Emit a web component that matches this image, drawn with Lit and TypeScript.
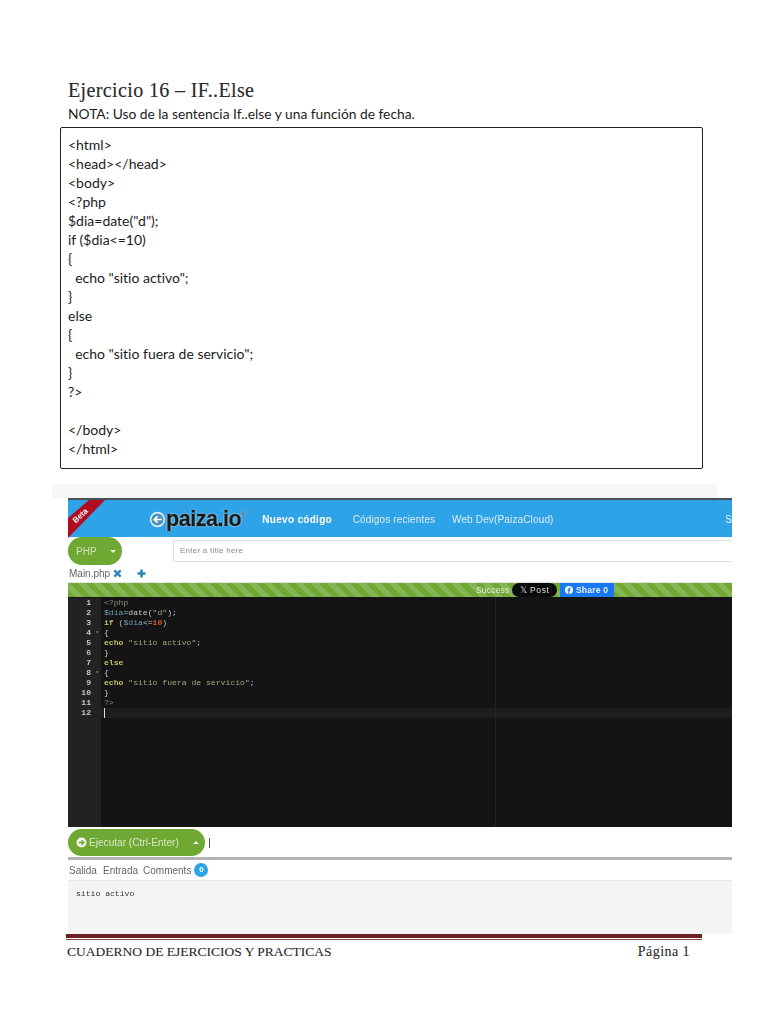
import { LitElement, html, css } from "lit";
import { customElement } from "lit/decorators.js";

const codeLines = [
  "<html>", "<head></head>", "<body>", "<?php", '$dia=date("d");', "if ($dia<=10)", "{",
  '  echo "sitio activo";', "}", "else", "{", '  echo "sitio fuera de servicio";', "}", "?>", "\u00a0", "</body>", "</html>",
];

const editor = [
  html`<span class="g">&lt;?php</span>`,
  html`<span class="b">$dia</span><span class="w">=date(</span><span class="s">"d"</span><span class="w">);</span>`,
  html`<span class="k">if</span> <span class="w">(</span><span class="b">$dia</span><span class="w">&lt;=</span><span class="r">10</span><span class="w">)</span>`,
  html`<span class="w">{</span>`,
  html`<span class="k">echo</span> <span class="s">"sitio activo"</span><span class="w">;</span>`,
  html`<span class="w">}</span>`,
  html`<span class="k">else</span>`,
  html`<span class="w">{</span>`,
  html`<span class="k">echo</span> <span class="s">"sitio fuera de servicio"</span><span class="w">;</span>`,
  html`<span class="w">}</span>`,
  html`<span class="g">?&gt;</span>`,
  html`<span class="caret"></span>`,
];

@customElement("app-root")
export class AppRoot extends LitElement {
  static styles = css`
    :host { display: block; width: 768px; height: 1024px; overflow: hidden; background: #fff; color: #222; }
    .title { margin: 78px 0 0 68px; height: 24px; font: 20px/24px "Liberation Serif", serif; letter-spacing: 0.37px; color: #2a2a2a; -webkit-text-stroke: 0.15px #2a2a2a; }
    .note { margin: 3px 0 0 68px; height: 17px; font: 13.8px/17px Lato, sans-serif; font-variant-ligatures: none; color: #1c1c1c; }
    .box { box-sizing: border-box; margin: 5px 0 0 60px; width: 643px; height: 342px; border: 1px solid #222; border-radius: 2px; padding: 7px 0 0 7px; font: 14px/19px Lato, sans-serif; font-variant-ligatures: none; color: #1c1c1c; white-space: pre; }
    .strip { margin: 15px 0 0 52px; width: 665px; height: 14px; background: #f6f6f6; }
    .shot { position: relative; margin-left: 68px; width: 664px; height: 436px; overflow: hidden; font-family: "Liberation Sans", sans-serif; filter: blur(0.45px); background: #fff; }
    .head { box-sizing: border-box; height: 39px; border-top: 2px solid #4a5058; background: #2ea3e8; display: flex; align-items: center; color: #eef7fd; font-size: 10px; letter-spacing: 0.15px; padding-top: 1px; }
    .ribbon { position: absolute; left: 0; top: 2px; }
    .logo { display: flex; align-items: center; margin-left: 81px; width: 114px; color: #141a1e; font: bold 21.5px/26px "Liberation Sans", sans-serif; letter-spacing: -0.45px; text-shadow: 0 0 1px #fff, 0 0 2px #dff; -webkit-text-stroke: 0.3px #141a1e; }
    .logo svg { flex: none; }
    .logo sup { font-size: 5px; line-height: 5px; align-self: flex-start; margin-top: 6px; letter-spacing: 0; -webkit-text-stroke: 0; }
    .nav-a { font-weight: bold; width: 91px; color: #fff; letter-spacing: 0.3px; }
    .nav-b { width: 100px; color: #dcecf8; }
    .nav-c { width: 275px; color: #dcecf8; }
    .row1 { display: flex; height: 28px; align-items: center; }
    .lang { box-sizing: border-box; width: 54px; height: 28px; border-radius: 14px; background: #6fa833; color: #cfe2b6; font-size: 10px; display: flex; align-items: center; justify-content: space-between; padding: 0 6px 0 8px; }
    .tri { width: 0; height: 0; border-left: 3px solid transparent; border-right: 3px solid transparent; border-top: 3px solid #e8f2dc; }
    .tri.up { border-top: 0; border-bottom: 3px solid #e8f2dc; }
    .input { box-sizing: border-box; margin-left: 51px; flex: 1; height: 22px; border: 1px solid #ddd; border-right: 0; border-radius: 2px; padding-left: 6px; color: #888; font-size: 8px; line-height: 20px; letter-spacing: 0.25px; }
    .tabs { display: flex; height: 18px; align-items: center; color: #666; font-size: 10px; border-bottom: 1px solid #e4e4e4; box-sizing: border-box; }
    .tab { padding: 0 0 0 1px; width: 44px; }
    .x { width: 9px; height: 9px; }
    .plus { width: 9px; height: 9px; margin-left: 15px; }
    .bar { height: 14px; background: repeating-linear-gradient(45deg, #6fa833 0 5.5px, #85b555 5.5px 11px); display: flex; align-items: center; color: #e6f0da; font-size: 8.5px; padding-left: 408px; letter-spacing: 0.2px; }
    .ok { width: 36px; }
    .post { box-sizing: border-box; width: 45px; height: 14px; border-radius: 7px; background: #0b0b0b; color: #ddd; text-align: center; line-height: 14px; letter-spacing: 0.6px; }
    .share { box-sizing: border-box; margin-left: 3px; width: 54px; height: 14px; background: #1877f2; color: #e8f1ff; display: flex; align-items: center; gap: 3px; padding-left: 5px; font-weight: bold; }
    .share svg { width: 8px; height: 8px; }
    .editor { position: relative; height: 230px; background: #141414; display: flex; font: 8.1px/10px "Liberation Mono", monospace; color: #ccc; padding-top: 1px; box-sizing: border-box; }
    .gutter { width: 33px; flex: none; background: #222; height: 229px; text-align: right; color: #c8c8c8; }
    .gutter div { height: 10px; padding-right: 10px; position: relative; font-weight: bold; }
    .gutter .fold::after { content: "▾"; position: absolute; right: 2px; top: 0; font-size: 6px; color: #888; }
    .lines { flex: 1; padding-left: 3px; }
    .lines div { height: 10px; white-space: pre; }
    .lines .active { background: #1e1e1e; margin-left: -3px; padding-left: 3px; }
    .divide { position: absolute; left: 427px; top: 0; bottom: 0; width: 1px; background: #222; }
    .g { color: #8f8a7a; } .b { color: #6f9fb5; } .w { color: #c8c8c8; } .s { color: #a3a380; } .k { color: #c4bf6a; font-weight: bold; } .r { color: #d8563a; font-weight: bold; }
    .caret { display: inline-block; width: 1px; height: 10px; background: #ddd; }
    .run-row { display: flex; align-items: center; height: 30px; padding-top: 1px; box-sizing: border-box; }
    .run { box-sizing: border-box; width: 137px; height: 27px; border-radius: 14px; background: #6fa833; color: #d9e8c8; font-size: 10.1px; display: flex; align-items: center; padding: 0 6px 0 8px; }
    .run svg { width: 11px; height: 11px; margin-right: 2px; flex: none; }
    .run span { flex: 1; }
    .cur { margin-left: 4px; width: 1px; height: 10px; background: #555; }
    .sep { height: 3px; background: #b4b4b4; }
    .tabs2 { display: flex; align-items: center; height: 20px; font-size: 10px; color: #666; box-sizing: border-box; padding-left: 1px; }
    .tabs2 span { margin-right: 5px; }
    .tabs2 .on { margin-right: 5px; width: 29px; }
    .badge { box-sizing: border-box; width: 14px; height: 14px; border-radius: 50%; background: #2ea3e8; color: #fff; font-size: 8px; line-height: 14px; text-align: center; font-weight: bold; margin: 0 0 0 -2px; }
    .out { height: 54px; background: #f4f4f4; border-top: 1px solid #e6e6e6; box-sizing: border-box; padding: 7px 0 0 8px; font: 8.1px/11px "Liberation Mono", monospace; color: #333; }
    .rule { margin-left: 66px; width: 636px; height: 6px; box-sizing: border-box; border-top: 4px solid #6b2122; border-bottom: 1px solid #8a4a4a; }
    .foot { margin: 3px 0 0 67px; width: 623px; display: flex; justify-content: space-between; font: 13.5px/18px "Liberation Serif", serif; color: #2a2a2a; -webkit-text-stroke: 0.1px #2a2a2a; }
    .foot .r2 { font-size: 14px; letter-spacing: 0.45px; }
  `;

  render() {
    return html`
      <div class="title">Ejercicio 16 – IF..Else</div>
      <div class="note">NOTA: Uso de la sentencia If..else y una función de fecha.</div>
      <div class="box">${codeLines.map((l) => html`<div>${l}</div>`)}</div>
      <div class="strip"></div>
      <div class="shot">
        <div class="head">
          <div class="logo">
            <svg width="17" height="17" viewBox="0 0 16 16"><circle cx="8" cy="8" r="6.500" fill="#4e93b8" stroke="#dfeef7" stroke-width="1.500"/><path d="M12 8H6M8 5 5 8l3 3" fill="none" stroke="#fff" stroke-width="1.600"/></svg>
            paiza.io<sup>®</sup>
          </div>
          <div class="nav-a">Nuevo código</div>
          <div class="nav-b">Códigos recientes</div>
          <div class="nav-c">Web Dev(PaizaCloud)</div>
          <div>S</div>
        </div>
        <svg class="ribbon" width="38" height="38" viewBox="0 0 38 38"><polygon points="0,18 21,0 37,0 0,38" fill="#b00d20"/><text x="6" y="21" fill="#fff" font-size="8" font-weight="bold" font-family="Liberation Sans" transform="rotate(-43 10 20)">Beta</text></svg>
        <div class="row1">
          <div class="lang">PHP <i class="tri"></i></div>
          <div class="input">Enter a title here</div>
        </div>
        <div class="tabs">
          <div class="tab">Main.php</div>
          <svg class="x" viewBox="0 0 10 10"><path d="M1.500 1.500l7 7M8.500 1.500l-7 7" stroke="#2a86b5" stroke-width="2.600"/></svg>
          <svg class="plus" viewBox="0 0 10 10"><path d="M5 .5v9M.5 5h9" stroke="#2a86b5" stroke-width="2.800"/></svg>
        </div>
        <div class="bar">
          <div class="ok">Success</div>
          <div class="post">𝕏 Post</div>
          <div class="share"><svg viewBox="0 0 10 10"><circle cx="5" cy="5" r="5" fill="#fff"/><path d="M5.600 10V6.200h1.200l.2-1.400H5.600V4c0-.4.2-.7.7-.7H7V2.100C6.700 2 6.300 2 6 2 5 2 4.200 2.700 4.200 3.800v1H3v1.400h1.200V10z" fill="#1877f2"/></svg>Share 0</div>
        </div>
        <div class="editor">
          <div class="gutter">
            ${editor.map((_, i) => html`<div class=${i === 3 || i === 7 ? "fold" : ""}>${i + 1}</div>`)}
          </div>
          <div class="lines">
            ${editor.map((l, i) => html`<div class=${i === 11 ? "active" : ""}>${l}</div>`)}
          </div>
          <div class="divide"></div>
        </div>
        <div class="run-row">
          <div class="run">
            <svg viewBox="0 0 12 12"><circle cx="6" cy="6" r="5.500" fill="#f2f6ec"/><path d="M3 6h5M6 3.500 8.500 6 6 8.500" fill="none" stroke="#6fa833" stroke-width="1.600"/></svg>
            <span>Ejecutar (Ctrl-Enter)</span><i class="tri up"></i>
          </div>
          <div class="cur"></div>
        </div>
        <div class="sep"></div>
        <div class="tabs2">
          <span class="on">Salida</span><span>Entrada</span><span>Comments</span><div class="badge">0</div>
        </div>
        <div class="out">sitio activo</div>
      </div>
      <div class="rule"></div>
      <div class="foot"><span class="l">CUADERNO DE EJERCICIOS Y PRACTICAS</span><span class="r2">Página 1</span></div>
    `;
  }
}
